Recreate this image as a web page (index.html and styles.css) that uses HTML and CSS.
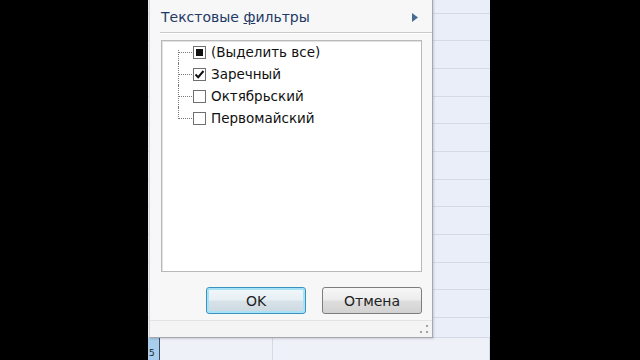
FILE: index.html
```html
<!DOCTYPE html>
<html lang="ru">
<head>
  <meta charset="UTF-8" />
  <title>Фильтр</title>
  <link rel="stylesheet" href="styles.css">
</head>
<body>
  <div class="stage">
    <div class="bar"></div>
    <div class="sheet">
      <div class="bottom-row">
        <div class="row-head">5</div>
        <div class="cell wide"></div>
        <div class="cell"></div>
      </div>

      <div class="panel">
        <div class="title-row">
          <span class="title">Текстовые <u>ф</u>ильтры</span>
          <svg class="arrow" width="6" height="9" viewBox="0 0 6 9"><path d="M0 0 L6 4.5 L0 9 Z" fill="#4a6a94"/></svg>
        </div>
        <div class="sep"></div>

        <div class="listbox">
          <div class="tree">
            <div class="item first">
              <span class="box part"><span class="fill"></span></span>
              <span>(Выделить все)</span>
            </div>
            <div class="item">
              <span class="box">
                <svg width="11" height="11" viewBox="0 0 11 11"><path d="M1.5 5.5 L4.2 8.2 L9.5 2" fill="none" stroke="#111" stroke-width="2"/></svg>
              </span>
              <span>Заречный</span>
            </div>
            <div class="item">
              <span class="box"></span>
              <span>Октябрьский</span>
            </div>
            <div class="item last">
              <span class="box"></span>
              <span>Первомайский</span>
            </div>
          </div>
        </div>

        <div class="buttons">
          <button class="btn focus">OK</button>
          <button class="btn">Отмена</button>
        </div>
        <div class="footer">
          <svg class="grip" width="9" height="9" viewBox="0 0 9 9">
            <rect x="6" y="0" width="2" height="2" fill="#a0a0a0"/>
            <rect x="6" y="6" width="2" height="2" fill="#a0a0a0"/>
            <rect x="0" y="6" width="2" height="2" fill="#a0a0a0"/>
          </svg>
        </div>
      </div>
    </div>
    <div class="bar"></div>
  </div>
</body>
</html>
```

FILE: styles.css
```css
body {
  margin: 0;
  background: #000;
  font-family: "DejaVu Sans", sans-serif;
  overflow: hidden;
}
.stage {
  display: flex;
  width: 640px;
  height: 360px;
}
.bar {
  width: 148px;
  background: #000;
}
.bar:last-child {
  width: 150px;
}
.sheet {
  position: relative;
  width: 342px;
  background-color: #eaeef8;
  background-image: repeating-linear-gradient(to bottom, transparent 0, transparent 12.7px, #d3d9e6 12.7px, #d3d9e6 13.7px, transparent 13.7px, transparent 27.67px);
  display: flex;
  flex-direction: column;
  justify-content: flex-end;
}
.bottom-row {
  display: flex;
  height: 22px;
  border-top: 1px solid #d3d9e6;
}
.row-head {
  width: 12px;
  background: #a9cdec;
  border-right: 1px solid #3c4a5c;
  color: #1d1d1d;
  font-size: 9px;
  line-height: 9px;
  padding-top: 11px;
  padding-left: 1px;
  box-sizing: border-box;
}
.cell {
  flex: 1;
  border-right: 1px solid #d3d9e6;
  background: #eef1f8;
}
.cell.wide {
  flex: 0 0 112px;
}

/* dropdown over the sheet */
.panel {
  position: absolute;
  left: 1px;
  top: -2px;
  width: 282px;
  height: 339px;
  background: #f7f7f7;
  border-right: 1px solid #a4a8ae;
  border-bottom: 1px solid #a4a8ae;
  border-left: 1px solid #d6d6d6;
  box-shadow: 1px 1px 2px rgba(0, 0, 0, 0.15);
  display: flex;
  flex-direction: column;
}
.title-row {
  display: flex;
  align-items: center;
  justify-content: space-between;
  height: 30px;
  padding: 4px 14px 0 11px;
}
.title {
  color: #1f3a66;
  font-size: 14px;
}
.sep {
  height: 1px;
  margin-left: 10px;
  background: #c9c9c9;
  border-bottom: 1px solid #fff;
}
.listbox {
  margin: 6px 10px 0 11px;
  height: 230px;
  background: #fff;
  border: 1px solid #b9b9b9;
  box-shadow: inset 1px 1px 0 #e2e2e2;
}
.tree {
  margin: 0 0 0 16px;
}
.item {
  display: flex;
  align-items: center;
  height: 22px;
  font-size: 13.5px;
  color: #111;
  padding-left: 15px;
  position: relative;
}
.item::before {
  content: "";
  position: absolute;
  left: 0;
  top: 11px;
  width: 14px;
  border-top: 1px dotted #7a7a7a;
}
.item::after {
  content: "";
  position: absolute;
  left: 0;
  top: 0;
  height: 22px;
  border-left: 1px dotted #7a7a7a;
}
.item.first::after {
  top: 9px;
  height: 13px;
}
.item.last::after {
  height: 12px;
}
.box {
  width: 11px;
  height: 11px;
  border: 1px solid #6f6f6f;
  background: #fff;
  margin-right: 5px;
  display: flex;
  align-items: center;
  justify-content: center;
}
.box .fill {
  width: 7px;
  height: 7px;
  background: #111;
}
.buttons {
  display: flex;
  justify-content: flex-end;
  gap: 16px;
  margin: 15px 10px 0 0;
}
.btn {
  width: 100px;
  height: 27px;
  font-family: "DejaVu Sans", sans-serif;
  font-size: 14px;
  color: #222;
  border: 1px solid #7d7d7d;
  border-radius: 3px;
  background: linear-gradient(#f6f6f6 0%, #ececec 48%, #dedede 52%, #d2d2d2 100%);
  padding: 0;
}
.btn.focus {
  border-color: #3a93bd;
  box-shadow: inset 0 0 0 2px #a8e2f6;
  background: linear-gradient(#f2f8fb 0%, #e6eff3 48%, #d8e3e9 52%, #cbd8df 100%);
}
.footer {
  flex: 1;
  margin-top: 6px;
  border-top: 1px solid #e4e4e4;
  background: #f4f4f4;
  position: relative;
}
.grip {
  position: absolute;
  right: 3px;
  bottom: 3px;
}
```
